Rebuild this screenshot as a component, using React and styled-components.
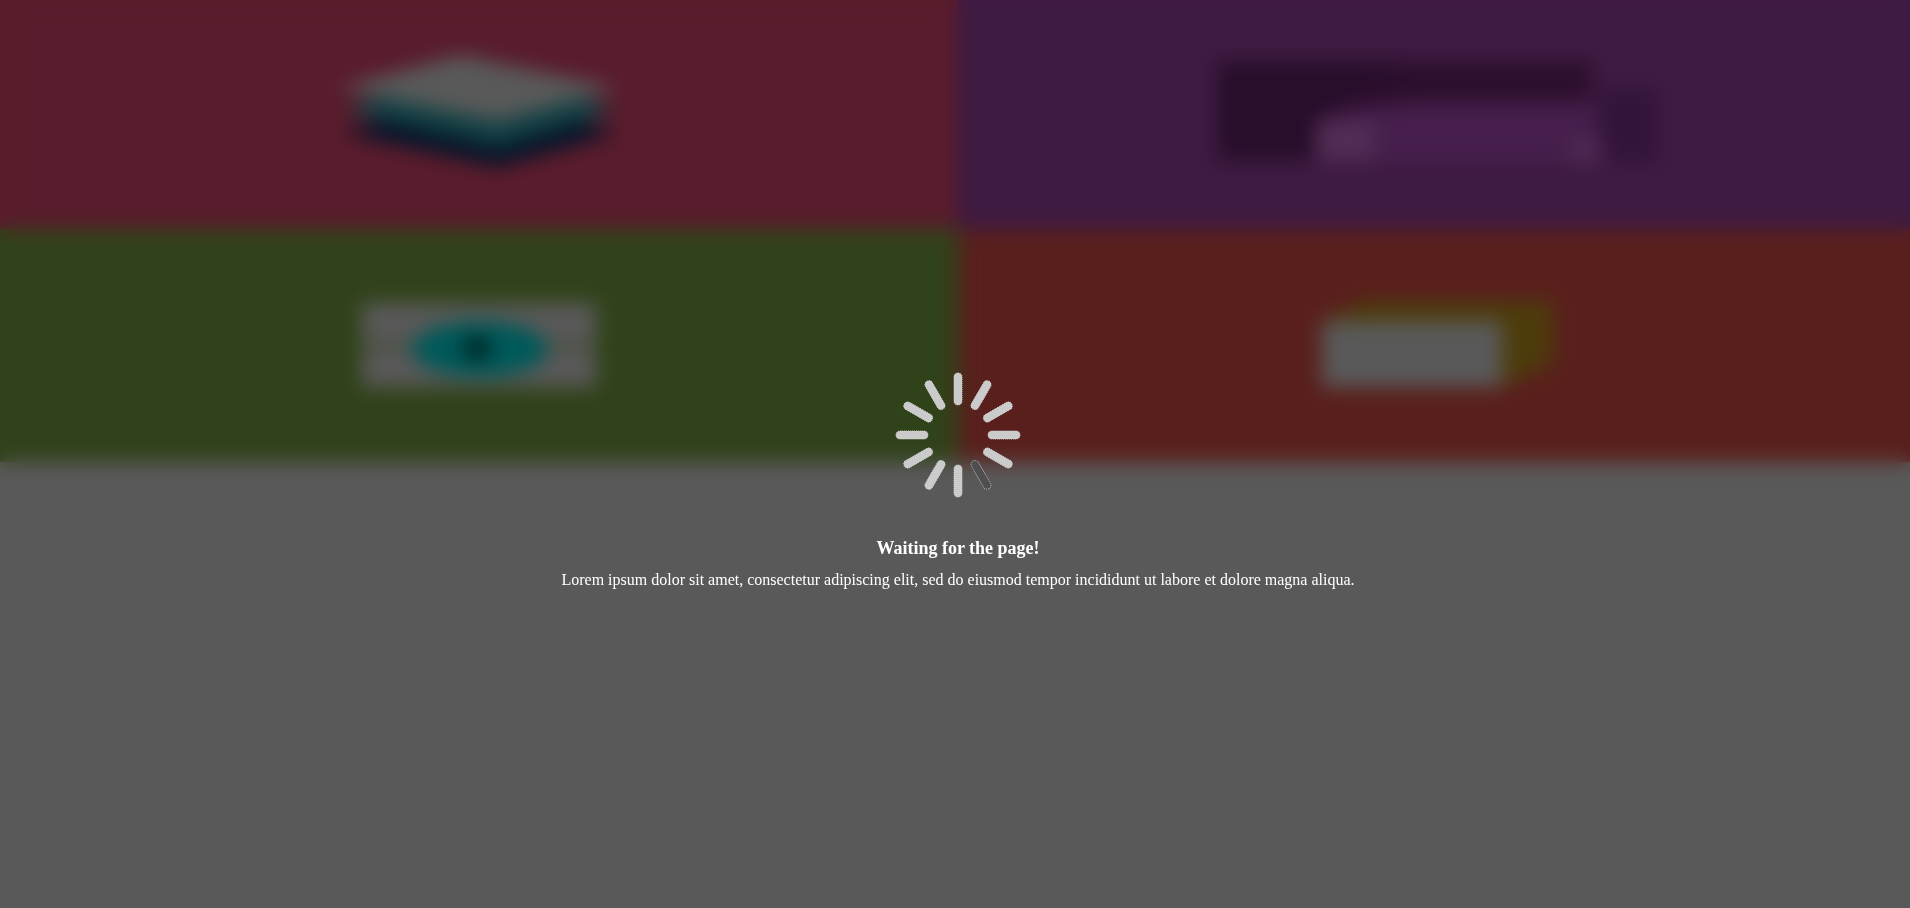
import styled, { createGlobalStyle } from "styled-components"

const GlobalStyle = createGlobalStyle`
    body {
        margin: 0;
        overflow: hidden;
        background-color: #ffffff;
        font-family: "Liberation Serif", "Times New Roman", serif;
    }
`
const Page = styled.div`
    min-height: 100vh;
    margin-right: -6px;
    position: relative;
`
const Gallery = styled.main`
    display: grid;
    grid-template-columns: 1fr 1fr;
`
const Tile = styled.section`
    display: flex;
    align-items: center;
    justify-content: center;
    padding: ${props => props.$last ? '36px 0' : '34px 0'};
    background-color: ${props => props.$color};
`
const Art = styled.svg`
    display: block;
    width: ${props => props.$wide ? '480px' : '300px'};
    height: 161px;
`
const Overlay = styled.div`
    position: absolute;
    inset: 0;
    display: flex;
    flex-direction: column;
    align-items: center;
    padding-top: 335px;
    background-color: rgba(0, 0, 0, 0.65);
    backdrop-filter: blur(10px);
    color: #ffffff;
    text-align: center;
`
const Spinner = styled.svg`
    width: 200px;
    height: 200px;
`
const Title = styled.h1`
    margin: 3px 0 0;
    font-size: 18px;
    line-height: 20px;
`
const Description = styled.p`
    margin: 13px 0 0;
    font-size: 16px;
    line-height: 18px;
`

const bars = Array.from({ length: 12 }, (_, i) => i * 30)

function Layers() {
  return (
    <Art viewBox="0 0 300 161" aria-hidden="true">
        <path d="M14 99 L60 84 H240 L288 99 L169 133Z" fill="#123a78" />
        <path d="M14 76 L60 60 H240 L288 76 L169 112Z" fill="#35bcc4" />
        <path d="M9 54 L131 21 L290 54 L169 87Z" fill="#ffffff" />
    </Art>
  )
}

function Blocks() {
  return (
    <Art $wide viewBox="0 0 480 161" aria-hidden="true">
        <rect x="21" y="28" width="373" height="98" fill="#7c2880" />
        <path d="M21 28H220L160 54L118 84V126H21Z" fill="#72287a" />
        <rect x="402" y="55" width="58" height="74" fill="#913aa4" />
        <path d="M118 86L160 74L220 67H394L410 127H118Z" fill="#c859d9" />
        <rect x="120" y="87" width="58" height="40" fill="#e980f4" />
        <path d="M366 127L388 100L410 127Z" fill="#e980f4" />
    </Art>
  )
}

function Eye() {
  return (
    <Art viewBox="0 0 300 161" aria-hidden="true">
        <rect x="33" y="38" width="234" height="84" fill="#ffffff" />
        <rect x="33" y="79" width="234" height="4" fill="#89bd4a" />
        <ellipse cx="151" cy="84" rx="68" ry="28" fill="#00ffff" />
        <ellipse cx="148" cy="83" rx="15" ry="11" fill="#006060" />
    </Art>
  )
}

function Box() {
  return (
    <Art viewBox="0 0 300 161" aria-hidden="true">
        <path d="M35 56L78 36H266V98L214 122Z" fill="#dbab20" />
        <rect x="35" y="56" width="180" height="66" fill="#ffffff" />
    </Art>
  )
}

function App() {
  return (
    <Page>
        <GlobalStyle />
        <Gallery>
            <Tile $color="#ff507e"><Layers /></Tile>
            <Tile $color="#b14dbd"><Blocks /></Tile>
            <Tile $last $color="#8bbd4a"><Eye /></Tile>
            <Tile $last $color="#ff5b53"><Box /></Tile>
        </Gallery>
        <Overlay role="status">
            <Spinner viewBox="0 0 200 200" aria-hidden="true">
                {bars.map(angle => (
                    <g key={angle} transform={`rotate(${angle} 100 100)`}>
                        <rect x="96" y="38" width="8" height="32" rx="4" fill={angle === 150 ? '#4f4f4f' : '#cbcbcb'} />
                        <rect x="96" y="38" width="8" height="32" rx="4" fill="none" stroke={angle === 150 ? '#b0b0b0' : '#d4d4d4'} strokeDasharray="1 1" />
                    </g>
                ))}
            </Spinner>
            <Title>Waiting for the page!</Title>
            <Description>Lorem ipsum dolor sit amet, consectetur adipiscing elit, sed do eiusmod tempor incididunt ut labore et dolore magna aliqua.</Description>
        </Overlay>
    </Page>
  )
}

export default App
